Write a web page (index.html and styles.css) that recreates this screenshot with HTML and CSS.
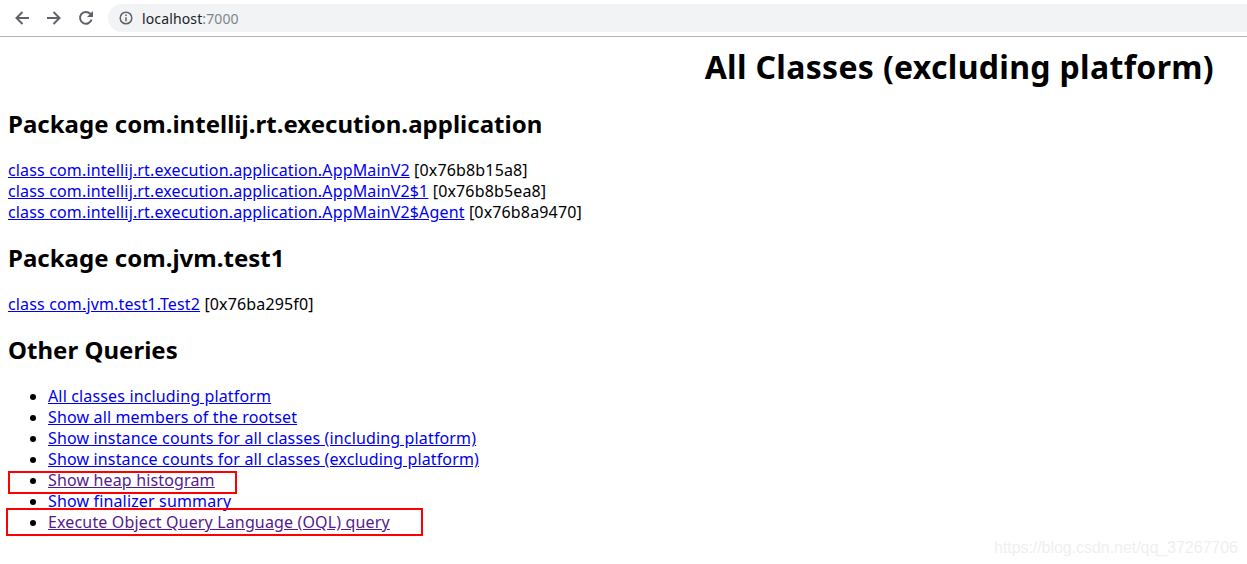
FILE: index.html
```html
<!DOCTYPE html>
<html lang="en">
<head>
<meta charset="utf-8">
<title>All Classes (excluding platform)</title>
<link rel="stylesheet" href="styles.css">
</head>
<body>
<header class="toolbar">
  <svg class="nav-icon" viewBox="0 0 16 16"><path d="M15 8H2.500M8.500 2 2.500 8l6 6"/></svg>
  <svg class="nav-icon" viewBox="0 0 16 16"><path d="M1 8h12.500M7.500 2l6 6-6 6"/></svg>
  <svg class="nav-icon" viewBox="0 0 16 16"><path d="M13.600 9.500A5.900 5.900 0 1 1 12.300 3.800L14 5.500"/><path class="solid" d="M15 1v6H9z"/></svg>
  <div class="address">
    <svg class="info" viewBox="0 0 14 14"><circle cx="7" cy="7" r="5.800"/><path d="M7 6.200v4M7 3.600v1.500"/></svg>
    <span class="url">localhost<span class="port">:7000</span></span>
  </div>
</header>
<main class="page">
  <h1 class="title">All Classes (excluding platform)</h1>
  <h2>Package com.intellij.rt.execution.application</h2>
  <p class="classes">
    <a href="#">class com.intellij.rt.execution.application.AppMainV2</a> [0x76b8b15a8]<br>
    <a href="#">class com.intellij.rt.execution.application.AppMainV2$1</a> [0x76b8b5ea8]<br>
    <a href="#">class com.intellij.rt.execution.application.AppMainV2$Agent</a> [0x76b8a9470]
  </p>
  <h2>Package com.jvm.test1</h2>
  <p class="classes"><a href="#">class com.jvm.test1.Test2</a> [0x76ba295f0]</p>
  <h2>Other Queries</h2>
  <ul class="queries">
    <li><a href="#">All classes including platform</a></li>
    <li><a href="#">Show all members of the rootset</a></li>
    <li><a href="#">Show instance counts for all classes (including platform)</a></li>
    <li><a href="#">Show instance counts for all classes (excluding platform)</a></li>
    <li><a class="visited" href="#">Show heap histogram</a></li>
    <li><a href="#">Show finalizer summary</a></li>
    <li><a class="visited" href="#">Execute Object Query Language (OQL) query</a></li>
  </ul>
</main>
<div class="mark mark-heap"></div>
<div class="mark mark-oql"></div>
<div class="watermark">https://blog.csdn.net/qq_37267706</div>
</body>
</html>
```

FILE: styles.css
```css
html, body { margin: 0; padding: 0; }
body {
  height: 564px;
  overflow: hidden;
  position: relative;
  background: #fff;
  color: #000;
  font-family: "Noto Sans", "Open Sans", sans-serif;
  font-size: 16px;
  line-height: 21px;
  letter-spacing: 0.15px;
}
.toolbar {
  height: 36px;
  border-bottom: 1px solid #b4b4b4;
  display: flex;
  align-items: center;
  padding-left: 14px;
  gap: 16px;
}
.nav-icon { width: 16px; height: 16px; flex: none; fill: none; stroke: #5f6368; stroke-width: 2; }
.nav-icon .solid { fill: #5f6368; stroke: none; }
.address {
  margin-left: -2px;
  flex: 1;
  height: 28px;
  background: #f1f3f4;
  border-radius: 14px 0 0 14px;
  display: flex;
  align-items: center;
  padding-left: 11px;
  gap: 9px;
}
.info { width: 14px; height: 14px; fill: none; stroke: #5f6368; stroke-width: 1.500; }
.url { font-size: 14px; color: #202124; letter-spacing: 0.13px; }
.port { color: #80868b; }
.page { padding: 0 8px; }
h1, h2 { font-weight: 700; margin: 0; }
.title {
  font-size: 32px;
  line-height: 42px;
  letter-spacing: 0.32px;
  text-align: right;
  padding: 9px 25px 1px 0;
}
h2 {
  font-size: 24px;
  line-height: 32px;
  letter-spacing: 0.02px;
  padding-top: 19px;
}
.classes { margin: 20px 0 0; }
a { color: #0000ee; }
a.visited { color: #551a8b; }
.queries { margin: 20px 0 0; padding-left: 40px; }
.mark { position: absolute; border: 2px solid #f00; }
.mark-heap { left: 8px; top: 471px; width: 225px; height: 19px; }
.mark-oql { left: 6px; top: 508px; width: 413px; height: 24px; }
.watermark {
  position: absolute;
  left: 994px;
  top: 537px;
  font-family: "Liberation Sans", sans-serif;
  font-size: 16px;
  letter-spacing: -0.05px;
  color: #efefef;
}
```
